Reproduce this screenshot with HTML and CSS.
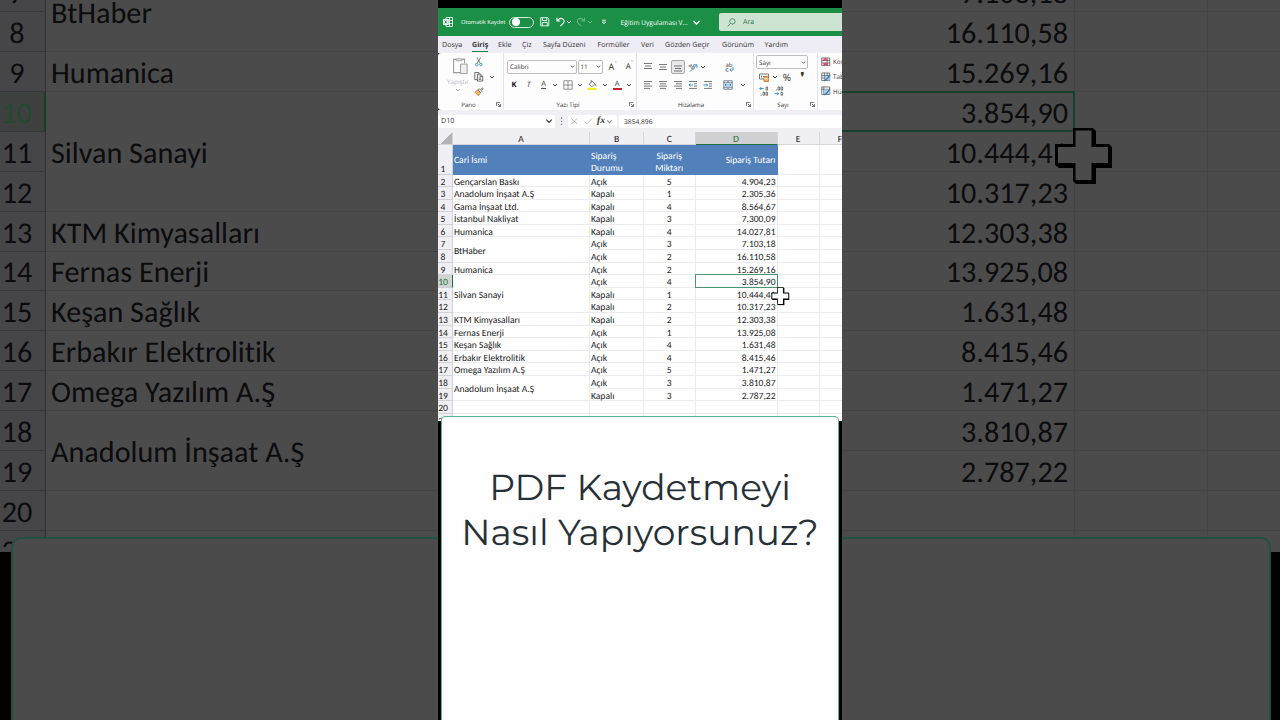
FILE: index.html
```html
<!DOCTYPE html>
<html lang="tr">
<head>
  <meta charset="UTF-8" />
  <meta name="viewport" content="width=device-width, initial-scale=1.0"/>
  <title>PDF Kaydetme</title>
  <link rel="stylesheet" href="styles.css">
</head>
<body>
  <svg class="defs">
    <symbol id="chev" viewBox="0 0 6 6"><path d="M1 2l2 2 2-2" fill="none" stroke="currentColor" stroke-width=".9"/></symbol>
    <symbol id="launch" viewBox="0 0 6 6"><path d="M.5 5V.5H5M2.2 2.2l3 3M5.4 2.5v2.9H2.5" fill="none" stroke="currentColor" stroke-width=".8"/></symbol>
    <symbol id="cross" viewBox="0 0 58 58"><path d="M19 1h20l3 3v13h13l3 3v21H42v16H22l-3-3V41H5l-4-3V17h18z" fill="#000"/><path class="cross-in" d="M21.500 3.500h16V20h16.500v16H37.500v17h-16V36H4V20h17.500z"/></symbol>
  </svg>

  <div class="stage">
    <div class="side side-left">
      <div class="big-sheet big-left">
        <div class="rn">7</div><div class="bc two">BtHaber</div>
        <div class="rn">8</div>
        <div class="rn">9</div><div class="bc">Humanica</div>
        <div class="rn cur">10</div><div class="bc three">Silvan Sanayi</div>
        <div class="rn">11</div>
        <div class="rn">12</div>
        <div class="rn">13</div><div class="bc">KTM Kimyasalları</div>
        <div class="rn">14</div><div class="bc">Fernas Enerji</div>
        <div class="rn">15</div><div class="bc">Keşan Sağlık</div>
        <div class="rn">16</div><div class="bc">Erbakır Elektrolitik</div>
        <div class="rn">17</div><div class="bc">Omega Yazılım A.Ş</div>
        <div class="rn">18</div><div class="bc two">Anadolum İnşaat A.Ş</div>
        <div class="rn">19</div>
        <div class="rn">20</div><div class="bc"></div>
        <div class="rn">21</div><div class="bc"></div>
      </div>
      <div class="big-card"></div>
    </div>

    <div class="phone">
      <div class="titlebar">
        <svg class="logo" viewBox="0 0 10 10"><path d="M3 .5h6.5v9H3zM6.5 .5v9M3 3.4h6.5M3 6.6h6.5" fill="none" stroke="#fff" stroke-width=".8"/><path d="M0 2h5.6v6H0z" fill="#fff"/><path d="M1.6 3.3l2.4 3.4M4 3.3L1.6 6.7" stroke="#1a8f45" stroke-width=".9"/></svg>
        <span class="autosave">Otomatik Kaydet</span>
        <span class="toggle"></span>
        <svg class="save" viewBox="0 0 10 10"><path d="M.7.7h7.4l1.2 1.2v7.4H.7zM2.6.7v3h4.6v-3M2.4 9.3V5.8h5.2v3.5" fill="none" stroke="#fff" stroke-width=".9"/></svg>
        <svg class="undo" viewBox="0 0 10 10"><path d="M1 .8v3.500h3.500M1.200 4.100C3 1.700 5.500.8 7.400 2.200 9.500 4 8.500 6 7 7.300L4.500 9.500" fill="none" stroke="#fff" stroke-width="1.100"/></svg>
        <svg class="c1" viewBox="0 0 6 6"><use href="#chev"/></svg>
        <svg class="redo" viewBox="0 0 10 10"><path d="M9 .8v3.500H5.500M8.800 4.100C7 1.700 4.500.8 2.600 2.200.5 4 1.500 6 3 7.300L5.500 9.500" fill="none" stroke="#fff" stroke-width="1.100"/></svg>
        <svg class="c2" viewBox="0 0 6 6"><use href="#chev"/></svg>
        <svg class="c3" viewBox="0 0 6 6"><path d="M1 1.200h4M1.200 3l1.800 1.800L4.800 3z" fill="none" stroke="#fff" stroke-width=".8"/></svg>
        <span class="doc">Eğitim Uygulaması V...</span>
        <svg class="c4" viewBox="0 0 6 6"><use href="#chev"/></svg>
        <div class="search">
          <svg viewBox="0 0 10 10"><circle cx="6" cy="3.800" r="3" fill="none" stroke="#2d7047" stroke-width=".8"/><path d="M3.800 6L.8 9.200" stroke="#2d7047" stroke-width=".8"/></svg>
          <span>Ara</span>
        </div>
      </div>

      <div class="tabs">
        <span>Dosya</span><span class="active"><b>Giriş</b></span><span>Ekle</span><span>Çiz</span><span>Sayfa Düzeni</span><span>Formüller</span><span>Veri</span><span>Gözden Geçir</span><span>Görünüm</span><span>Yardım</span>
      </div>

      <div class="ribbon">
        <div class="group pano">
          <div class="pano-tools">
            <div class="paste">
              <svg viewBox="0 0 17 19"><path d="M4.500 2.500H1.200v14h7M9.500 2.500h3.300v4" fill="none" stroke="#999" stroke-width="1.100"/><path d="M4 4V2h1.800a1.300 1.300 0 0 1 2.500 0H10v2z" fill="#ddd" stroke="#999" stroke-width=".8"/><path d="M8.500 7.500h7v10h-7z" fill="#eee" stroke="#999" stroke-width="1"/></svg>
              <span>Yapıştır</span>
              <svg class="ch" viewBox="0 0 6 6"><use href="#chev"/></svg>
            </div>
            <div class="clip">
              <svg viewBox="0 0 10 10"><path d="M3 .5l3.700 6.500M7 .5L3.300 7" stroke="#555" stroke-width=".8"/><circle cx="2.800" cy="8" r="1.300" fill="none" stroke="#2f86c5" stroke-width=".9"/><circle cx="7.200" cy="8" r="1.300" fill="none" stroke="#2f86c5" stroke-width=".9"/></svg>
              <svg viewBox="0 0 10 10"><path d="M3.500 8H.8V.6h4.400v1.500M3.600 2.300h3.200l2.400 2.300v4.900H3.600zM6.500 2.500v2.300h2.600M5 6.300h2.600M5 7.800h2.600" fill="none" stroke="#444" stroke-width=".8"/></svg>
              <svg viewBox="0 0 10 10"><path d="M1 5.500L4 3l3 3-2.500 3.200z" fill="#f3b36e" stroke="#d87d2c" stroke-width=".9"/><path d="M4 3l1.500-1.200L7 3.200 8.500.8l1 .9-1.700 2.400.5.6L7 6z" fill="#fff" stroke="#444" stroke-width=".7"/></svg>
            </div>
            <svg class="ch" viewBox="0 0 6 6"><use href="#chev"/></svg>
          </div>
          <div class="label"><span>Pano</span><svg viewBox="0 0 6 6"><use href="#launch"/></svg></div>
        </div>

        <div class="group font">
          <div class="row font-1">
            <div class="combo">Calibri<svg viewBox="0 0 6 6"><use href="#chev"/></svg></div>
            <div class="combo">11<svg viewBox="0 0 6 6"><use href="#chev"/></svg></div>
            <span class="grow">A<sup>ˆ</sup></span>
            <span class="grow small">A<sup>ˇ</sup></span>
          </div>
          <div class="row font-2">
            <b>K</b><i>T</i><span class="under">A</span>
            <svg class="ch" viewBox="0 0 6 6"><use href="#chev"/></svg>
            <svg class="ic" viewBox="0 0 10 10"><path d="M.8.8h8.400v8.400H.8zM5 .8v8.400M.8 5h8.400" fill="none" stroke="#777" stroke-width=".8"/></svg>
            <svg class="ch" viewBox="0 0 6 6"><use href="#chev"/></svg>
            <svg class="ic" viewBox="0 0 10 10"><path d="M2.200 4.200l3-3 2.700 2.700-3 2.800zM4.200 0v2.500M8.300 4.200l.9 2" fill="none" stroke="#555" stroke-width=".8"/><path d="M.3 7.700h9.400V10H.3z" fill="#f5ee25"/></svg>
            <svg class="ch" viewBox="0 0 6 6"><use href="#chev"/></svg>
            <span class="red">A</span>
            <svg class="ch" viewBox="0 0 6 6"><use href="#chev"/></svg>
          </div>
          <div class="label"><span>Yazı Tipi</span><svg viewBox="0 0 6 6"><use href="#launch"/></svg></div>
        </div>

        <div class="group align">
          <div class="row align-1">
            <svg class="ic" viewBox="0 0 10 10"><path d="M1 1.500h8M2 4h6M1 6.500h8" stroke="#555" stroke-width=".8"/></svg>
            <svg class="ic" viewBox="0 0 10 10"><path d="M1 2.500h8M2 5h6M1 7.500h8" stroke="#555" stroke-width=".8"/></svg>
            <span class="picked"><svg class="ic" viewBox="0 0 10 10"><path d="M1 4h8M2 6.500h6M1 9h8" stroke="#555" stroke-width=".8"/></svg></span>
            <svg class="ic" viewBox="0 0 10 10"><text x="0" y="6" font-size="6" fill="#444" transform="rotate(35 3 5)">ab</text><path d="M2 9.500l6.500-6.500M9 6V2.800H5.800" fill="none" stroke="#2f86c5" stroke-width=".9"/></svg>
            <svg class="ch" viewBox="0 0 6 6"><use href="#chev"/></svg>
            <i class="gap"></i>
            <svg class="ic" viewBox="0 0 10 10"><text x="1.500" y="5" font-size="6" fill="#444">ab</text><path d="M4.500 6.500H3.200a1.300 1.300 0 0 0 0 2.800h1.300" fill="none" stroke="#555" stroke-width=".8"/><path d="M9 5v3H6M7.300 6.500L5.800 8l1.500 1.500" fill="none" stroke="#2f86c5" stroke-width=".9"/></svg>
          </div>
          <div class="row align-2">
            <svg class="ic" viewBox="0 0 10 10"><path d="M1 1.500h8M1 3.800h6M1 6.100h8M1 8.400h6" stroke="#555" stroke-width=".8"/></svg>
            <svg class="ic" viewBox="0 0 10 10"><path d="M1 1.500h8M2 3.800h6M1 6.100h8M2 8.400h6" stroke="#555" stroke-width=".8"/></svg>
            <svg class="ic" viewBox="0 0 10 10"><path d="M1 1.500h8M3 3.800h6M1 6.100h8M3 8.400h6" stroke="#555" stroke-width=".8"/></svg>
            <svg class="ic" viewBox="0 0 10 10"><path d="M1 1.500h8M6 3.800h3M6 6.100h3M1 8.400h8" stroke="#555" stroke-width=".8"/><path d="M5 5H1M2.500 3.500L1 5l1.500 1.500" fill="none" stroke="#2f86c5" stroke-width=".9"/></svg>
            <svg class="ic" viewBox="0 0 10 10"><path d="M1 1.500h8M6 3.800h3M6 6.100h3M1 8.400h8" stroke="#555" stroke-width=".8"/><path d="M.5 5h4M3 3.500L4.500 5 3 6.500" fill="none" stroke="#2f86c5" stroke-width=".9"/></svg>
            <svg class="ic merge" viewBox="0 0 10 10"><path d="M.8.8h8.400v8.400H.8zM5 .8v2M5 7.200v2M.8 2.800h8.400M.8 7.200h8.400" fill="#fff" stroke="#4a6680" stroke-width=".8"/><path d="M2 5h6M3.200 3.800L2 5l1.200 1.200M6.800 3.800L8 5 6.800 6.200" fill="none" stroke="#2f86c5" stroke-width=".9"/></svg>
            <svg class="ch" viewBox="0 0 6 6"><use href="#chev"/></svg>
          </div>
          <div class="label"><span>Hizalama</span><svg viewBox="0 0 6 6"><use href="#launch"/></svg></div>
        </div>

        <div class="group number">
          <div class="combo">Sayı<svg viewBox="0 0 6 6"><use href="#chev"/></svg></div>
          <div class="row num-1">
            <svg class="ic" viewBox="0 0 10 10"><path d="M.5 2h9v5h-9zM2.500 3.500v2M4 4.500h1.500" fill="none" stroke="#555" stroke-width=".8"/><path d="M5 4.500h4.500v5H5z" fill="#f2a65a" stroke="#cf6f24" stroke-width=".8"/><path d="M5 6.800h4.500" stroke="#fff" stroke-width=".8"/></svg>
            <svg class="ch" viewBox="0 0 6 6"><use href="#chev"/></svg>
            <span class="pct">%</span>
            <span class="comma">❜</span>
          </div>
          <div class="row num-2">
            <svg class="ic" viewBox="0 0 10 10"><path d="M4.500 2.500H.8M2.300 1L.8 2.500 2.300 4" fill="none" stroke="#2f86c5" stroke-width=".9"/><path d="M7 1h1.600v3H7zM4 6.200h1.600v3H4zM7 6.200h1.600v3H7zM2.600 8.600l-.5 1.300" fill="none" stroke="#444" stroke-width=".7"/></svg>
            <svg class="ic" viewBox="0 0 10 10"><path d="M.5 7.700h4M3 6.200l1.500 1.500L3 9.200" fill="none" stroke="#2f86c5" stroke-width=".9"/><path d="M4 1h1.600v3H4zM7 1h1.600v3H7zM2.600 3.400l-.5 1.300M7 6.200h1.600v3H7z" fill="none" stroke="#444" stroke-width=".7"/></svg>
          </div>
          <div class="label"><span>Sayı</span><svg viewBox="0 0 6 6"><use href="#launch"/></svg></div>
        </div>

        <div class="group styles">
          <div><svg viewBox="0 0 10 10"><path d="M.8 1h8.400v8H.8zM.8 3.700h8.400M.8 6.300h8.400M6.500 1v8" fill="none" stroke="#555" stroke-width=".8"/><path d="M2.500 1.200h3.500v2.500H2.500zM2.500 6.300h4.500v2.500H2.500z" fill="#e5476a"/></svg>Koşullu</div>
          <div><svg viewBox="0 0 10 10"><path d="M.8 1h8.400v8H.8zM.8 3.700h8.400M.8 6.300h8.400M3.600 1v8M6.500 1v8" fill="none" stroke="#555" stroke-width=".8"/><path d="M4 4h5v4.800H4z" fill="#a5d0ef"/><path d="M9.500 3L5.500 8 3.500 9.500" fill="none" stroke="#2f76b5" stroke-width="1.300"/></svg>Tablo</div>
          <div><svg viewBox="0 0 10 10"><path d="M.8 1h8.400v8H.8zM.8 3.500h8.400M3 1v8" fill="none" stroke="#555" stroke-width=".8"/><path d="M3.200 3.700h5.500v4.800H3.200z" fill="#a5d0ef"/><path d="M9.500 3L5.500 8 3.500 9.500" fill="none" stroke="#2f76b5" stroke-width="1.300"/></svg>Hücre</div>
        </div>
      </div>

      <div class="formula">
        <div class="namebox">D10<svg viewBox="0 0 6 6"><use href="#chev"/></svg></div>
        <span class="dots">⋮</span>
        <div class="fx">
          <svg viewBox="0 0 10 10"><path d="M1.500 1.500l7 7M8.500 1.500l-7 7" stroke="#aaa" stroke-width=".9"/></svg>
          <svg viewBox="0 0 10 10"><path d="M.8 5.500L3.500 8l6-6.500" fill="none" stroke="#aaa" stroke-width=".9"/></svg>
          <em>fx</em>
          <svg class="ch" viewBox="0 0 6 6"><use href="#chev"/></svg>
        </div>
        <div class="value">3854,896</div>
      </div>

      <div class="sheet">
        <div class="ch0"></div><div class="h">A</div><div class="h">B</div><div class="h">C</div><div class="h on">D</div><div class="h">E</div><div class="h last">F</div>

        <div class="n tall">1</div><div class="th">Cari İsmi</div><div class="th low">Sipariş<br>Durumu</div><div class="th low mid">Sipariş<br>Miktarı</div><div class="th end">Sipariş Tutarı</div><div></div><div></div>
        <div class="n">2</div><div>Gençarslan Baskı</div><div>Açık</div><div class="q">5</div><div class="v">4.904,23</div><div></div><div></div>
        <div class="n">3</div><div>Anadolum İnşaat A.Ş</div><div>Kapalı</div><div class="q">1</div><div class="v">2.305,36</div><div></div><div></div>
        <div class="n">4</div><div>Gama İnşaat Ltd.</div><div>Kapalı</div><div class="q">4</div><div class="v">8.564,67</div><div></div><div></div>
        <div class="n">5</div><div>İstanbul Nakliyat</div><div>Kapalı</div><div class="q">3</div><div class="v">7.300,09</div><div></div><div></div>
        <div class="n">6</div><div>Humanica</div><div>Kapalı</div><div class="q">4</div><div class="v">14.027,81</div><div></div><div></div>
        <div class="n">7</div><div class="two">BtHaber</div><div>Açık</div><div class="q">3</div><div class="v">7.103,18</div><div></div><div></div>
        <div class="n">8</div><div>Açık</div><div class="q">2</div><div class="v">16.110,58</div><div></div><div></div>
        <div class="n">9</div><div>Humanica</div><div>Açık</div><div class="q">2</div><div class="v">15.269,16</div><div></div><div></div>
        <div class="n cur">10</div><div class="three">Silvan Sanayi</div><div>Açık</div><div class="q">4</div><div class="v sel">3.854,90</div><div></div><div></div>
        <div class="n">11</div><div>Kapalı</div><div class="q">1</div><div class="v">10.444,41</div><div></div><div></div>
        <div class="n">12</div><div>Kapalı</div><div class="q">2</div><div class="v">10.317,23</div><div></div><div></div>
        <div class="n">13</div><div>KTM Kimyasalları</div><div>Kapalı</div><div class="q">2</div><div class="v">12.303,38</div><div></div><div></div>
        <div class="n">14</div><div>Fernas Enerji</div><div>Açık</div><div class="q">1</div><div class="v">13.925,08</div><div></div><div></div>
        <div class="n">15</div><div>Keşan Sağlık</div><div>Açık</div><div class="q">4</div><div class="v">1.631,48</div><div></div><div></div>
        <div class="n">16</div><div>Erbakır Elektrolitik</div><div>Açık</div><div class="q">4</div><div class="v">8.415,46</div><div></div><div></div>
        <div class="n">17</div><div>Omega Yazılım A.Ş</div><div>Açık</div><div class="q">5</div><div class="v">1.471,27</div><div></div><div></div>
        <div class="n">18</div><div class="two">Anadolum İnşaat A.Ş</div><div>Açık</div><div class="q">3</div><div class="v">3.810,87</div><div></div><div></div>
        <div class="n">19</div><div>Kapalı</div><div class="q">3</div><div class="v">2.787,22</div><div></div><div></div>
        <div class="n">20</div><div></div><div></div><div></div><div></div><div></div><div></div>
        <div class="n">21</div><div></div><div></div><div></div><div></div><div></div><div></div>
      </div>
      <svg class="cursor" viewBox="0 0 58 58"><use href="#cross"/></svg>
      <div class="card">
        <h1>PDF Kaydetmeyi</h1>
        <h1 class="second">Nasıl Yapıyorsunuz?</h1>
      </div>
    </div>

    <div class="side side-right">
      <div class="big-sheet big-right">
        <div class="bv">7.103,18</div><div></div><div></div>
        <div class="bv">16.110,58</div><div></div><div></div>
        <div class="bv">15.269,16</div><div></div><div></div>
        <div class="bv sel">3.854,90</div><div></div><div></div>
        <div class="bv">10.444,41</div><div></div><div></div>
        <div class="bv">10.317,23</div><div></div><div></div>
        <div class="bv">12.303,38</div><div></div><div></div>
        <div class="bv">13.925,08</div><div></div><div></div>
        <div class="bv">1.631,48</div><div></div><div></div>
        <div class="bv">8.415,46</div><div></div><div></div>
        <div class="bv">1.471,27</div><div></div><div></div>
        <div class="bv">3.810,87</div><div></div><div></div>
        <div class="bv">2.787,22</div><div></div><div></div>
        <div></div><div></div><div></div>
        <div></div><div></div><div></div>
      </div>
      <svg class="cursor" viewBox="0 0 58 58"><use href="#cross"/></svg>
      <div class="big-card"></div>
    </div>
  </div>
</body>
</html>
```
FILE: styles.css
```css
* { margin: 0; padding: 0; box-sizing: border-box; }
body {
  background: #000;
  overflow: hidden;
  font-family: 'Open Sans', 'Noto Sans', sans-serif;
  text-rendering: geometricPrecision;
}
.defs { position: absolute; width: 0; height: 0; }
svg { display: block; flex: none; overflow: visible; }
.stage {
  display: grid;
  grid-template-columns: 438px 404px 438px;
  height: 720px;
}

/* dimmed enlarged sheet on both sides */
.side { position: relative; overflow: hidden; height: 720px; background: #000; }
.big-sheet {
  display: grid;
  grid-auto-rows: 39.87px;
  height: 579.5px;
  margin-top: -27.5px;
  overflow: hidden;
  background: #4b4b4b;
  font-family: Carlito, Calibri, sans-serif;
  font-variant-ligatures: none;
  font-size: 30.2px;
  color: #0c0c0e;
}
.big-left { grid-template-columns: 46px 392px; }
.big-right { grid-template-columns: 233px 133px 72px; }
.big-sheet > div {
  display: flex;
  align-items: center;
  border-bottom: 1px solid #434344;
  white-space: nowrap;
}
.big-sheet .rn {
  grid-column: 1;
  justify-content: center;
  padding-right: 11px;
  padding-top: 4px;
  background: #464649;
  border-right: 1px solid #333;
  border-bottom-color: #38383a;
}
.big-sheet .rn.cur { background: #3e4140; color: #24492f; border-right: 2px solid #173d2a; }
.big-sheet .bc { grid-column: 2; padding-left: 5px; padding-top: 4px; }
.big-right > div { border-right: 1px solid #434344; }
.big-right > div:nth-child(3n) { border-right: none; }
.big-sheet .bv { justify-content: flex-end; padding-right: 6px; padding-top: 4px; }
.big-sheet .bv.sel { border: 2px solid #173f2d; border-left: none; margin-top: -1px; padding-right: 5px; }
.two { grid-row: span 2; }
.three { grid-row: span 3; }
.big-card {
  position: absolute;
  top: 537px;
  height: 200px;
  background: #4b4b4b;
  border: 2px solid #1d5242;
}
.side-left .big-card { left: 11px; right: 0; border-right: none; border-radius: 10px 0 0 0; }
.side-right .big-card { left: 0; right: 9.5px; border-left: none; border-radius: 0 10px 0 0; }
.cursor { position: absolute; width: 18.5px; height: 18.5px; left: 333px; top: 286.5px; }
.cross-in { fill: var(--in, #fff); }
.side-right .cursor { --in: #4b4b4b; width: 58px; height: 58px; left: 212px; top: 127px; }

/* middle */
.phone { position: relative; overflow: hidden; height: 720px; padding-top: 8px; background: #000; }
.titlebar {
  display: flex;
  align-items: center;
  height: 28px;
  background: #1a8f45;
  color: #fff;
  font-size: 5.7px;
  white-space: nowrap;
}
.titlebar > * { flex: none; }
.logo { width: 10px; height: 10px; margin-left: 5px; }
.autosave { width: 48px; margin-left: 8px; }
.toggle { width: 25px; height: 11px; border: 1px solid #d5ecdc; border-radius: 6px; }
.toggle::before { content: ""; display: block; width: 8px; height: 8px; margin: .5px 0 0 1.5px; border-radius: 50%; background: #fff; }
.save { width: 9.5px; height: 9.5px; margin-left: 5.5px; }
.undo { width: 9.5px; height: 9.5px; margin-left: 6.5px; }
.redo { width: 9.5px; height: 9.5px; margin-left: 4px; opacity: .35; }
.c1, .c2, .c3 { width: 6px; height: 6px; margin-left: 1px; }
.c2 { opacity: .4; }
.c3 { margin-left: 8px; }
.doc { width: 70px; margin-left: 14px; font-size: 6.6px; }
.c4 { width: 9px; height: 9px; margin-left: 1.5px; }
.search {
  display: flex;
  align-items: center;
  gap: 7.5px;
  width: 123px;
  height: 18.5px;
  margin-left: 17.5px;
  padding-left: 8px;
  background: #cde4d3;
  border-radius: 2px 0 0 2px;
  color: #2d7047;
  font-size: 7px;
}
.search svg { width: 9px; height: 9px; }
.tabs {
  display: grid;
  grid-template-columns: 30px 26px 24px 21px 54.5px 43.5px 24px 57px 42.5px 40px;
  align-items: center;
  height: 17px;
  padding-left: 4px;
  background: #eeecf4;
  color: #333;
  font-size: 7.1px;
  white-space: nowrap;
}
.tabs b { display: inline-block; height: 13px; line-height: 12px; margin-top: 2px; border-bottom: 1.5px solid #1a7f45; }
.ribbon {
  display: flex;
  height: 57px;
  padding-left: 1px;
  background: #fdfdfe;
  border-radius: 3px 0 0 3px;
  overflow: hidden;
  color: #333;
  font-size: 6.3px;
}
.group { display: flex; flex-direction: column; flex: none; border-right: 1px solid #e2e2e4; white-space: nowrap; }
.label { display: flex; align-items: center; height: 10px; margin-top: auto; margin-bottom: 1px; font-size: 6.1px; }
.label span { flex: 1; text-align: center; }
.label svg { width: 5px; height: 5px; margin-right: 2px; }
.ch { width: 6px; height: 6px; }
.ic { width: 10px; height: 10px; }
.row { display: grid; align-items: center; justify-items: center; }
.combo {
  display: flex;
  align-items: center;
  justify-content: space-between;
  height: 14px;
  padding: 0 1px 0 2px;
  border: 1px solid #bdbdc0;
  border-radius: 2px;
}
.combo svg { width: 5px; height: 5px; }
.pano { width: 65px; }
.pano-tools { display: flex; height: 43px; padding-top: 4px; }
.paste { width: 34px; margin-left: 2px; display: flex; flex-direction: column; align-items: center; color: #b8b8bc; }
.paste svg { width: 17px; height: 18px; margin-left: 5px; }
.paste span { line-height: 9px; margin-top: 2px; }
.paste .ch { width: 6px; height: 6px; margin: 1px 0 0; }
.clip { display: flex; flex-direction: column; gap: 5.5px; }
.clip svg { width: 9.5px; height: 9.5px; margin-left: -1px; }
.pano-tools > .ch { margin: 17px 0 0 5px; }
.pano .label span { padding-left: 2px; }
.font { width: 133px; padding-left: 3px; }
.font-1 { grid-template-columns: 70px 25px 21px 13px; height: 14px; margin-top: 6.5px; }
.font-1 .combo { width: 100%; }
.font-1 .combo + .combo { margin-left: 1px; }
.grow { font-size: 9px; line-height: 12px; }
.grow sup { font-size: 6px; line-height: 0; }
.small { font-size: 8px; }
.font-2 { grid-template-columns: 14px 15px 15px 8px 18px 6px 18px 7px 18px 5px; height: 12px; margin-top: 5px; font-size: 7.5px; }
.font-2 b { color: #111; }
.font-2 .under { border-bottom: 1px solid #555; line-height: 8px; }
.font-2 .red { width: 9px; text-align: center; line-height: 8px; border-bottom: 2px solid #c9202c; }
.align { width: 117px; padding-left: 4px; }
.align .label span { padding-right: 5px; }
.align-1 { grid-template-columns: 14.8px 14.8px 14.8px 15px 5px 17px 14px; height: 15px; margin-top: 6px; }
.picked { display: flex; align-items: center; justify-content: center; width: 13.5px; height: 14px; background: #e8e8ea; border: 1px solid #aaa; border-radius: 2px; }
.align-2 { grid-template-columns: 14.8px 14.8px 14.8px 14.8px 14.8px 27px 3px; height: 12px; margin-top: 4.5px; }
.number { width: 64px; padding-left: 2px; }
.number .combo { width: 52px; height: 14px; margin-top: 2px; }
.num-1 { grid-template-columns: 15px 8px 16px 15px; height: 12px; margin-top: 2px; }
.pct { font-size: 10px; line-height: 12px; }
.comma { font-size: 12px; font-weight: bold; line-height: 12px; }
.num-2 { grid-template-columns: 15px 15px; height: 12px; margin-top: 2px; }
.styles { padding: 4px 0 0 3px; gap: 5px; border: none; }
.styles div { display: flex; align-items: center; gap: 2.5px; height: 9.7px; }
.styles svg { width: 9.5px; height: 9.5px; }

.formula { display: flex; align-items: center; height: 22px; padding: 1px 0; background: #f0eff4; font-size: 6.7px; color: #333; }
.namebox, .fx, .value { display: flex; align-items: center; height: 13px; background: #fff; border-radius: 2px; }
.namebox { width: 117px; padding: 0 2px 0 3px; justify-content: space-between; font-size: 7.2px; }
.namebox svg { width: 8px; height: 8px; }
.dots { width: 13px; text-align: center; font-size: 9px; line-height: 12px; }
.fx { width: 49px; padding-left: 2px; gap: 5px; }
.fx svg { width: 8.5px; height: 8.5px; }
.fx em { font: italic bold 9.5px 'Liberation Serif', serif; }
.fx .ch { width: 7px; height: 7px; margin-left: -4px; color: #888; }
.value { flex: 1; margin-left: 2px; padding-left: 5px; }

.sheet {
  display: grid;
  grid-template-columns: 15px 137px 54px 51.5px 82px 42px 42px;
  grid-template-rows: 12.5px 30px;
  grid-auto-rows: 12.6px;
  height: 288.5px;
  overflow: hidden;
  background: #fff;
  font-family: Carlito, Calibri, sans-serif;
  font-variant-ligatures: none;
  font-size: 9.55px;
  color: #1c1c1c;
}
.sheet > div {
  display: flex;
  align-items: center;
  min-height: 0;
  padding: 2.4px 1px 0;
  border-right: 1px solid #ececee;
  border-bottom: 1px solid #ececee;
  line-height: 12px;
  white-space: nowrap;
}
.sheet .h { justify-content: center; background: #f0eff3; border-color: #d6d6da; }
.sheet .on { background: #d0d0d2; color: #1f7044; border-bottom-color: #1f7044; }
.sheet .ch0 { background: linear-gradient(135deg, #f0eff3 55%, #b4b4b8 56%); border-color: #d6d6da; }
.sheet .n { grid-column: 1; justify-content: center; padding: 2.4px 4px 0 0; background: #f0eff3; border-color: #d2d2d6; }
.sheet .n.cur { background: #d0d4d2; color: #1f7044; border-right-color: #1f7044; }
.sheet .n.tall { padding-top: 19px; }
.sheet .th { background: #5280bb; color: #fff; border-color: #5280bb; }
.sheet .low { padding-top: 6px; line-height: 12.4px; }
.sheet .mid { justify-content: center; text-align: center; }
.sheet .end { justify-content: flex-end; }
.sheet .q { justify-content: center; }
.sheet .v { justify-content: flex-end; }
.sheet .v.sel { border: 1px solid #4b9672; margin: -1px 0 0 -1px; padding-right: 1px; }

.card {
  position: absolute;
  left: 3px;
  right: 3px;
  top: 416px;
  height: 320px;
  padding-top: 49px;
  background: #fefefe;
  border: 1px solid #5cb398;
  border-radius: 4px;
  text-align: center;
}
h1 {
  font-family: Montserrat, Inter, sans-serif;
  font-weight: 400;
  font-size: 36px;
  line-height: 44.5px;
  color: #263036;
  white-space: nowrap;
}
```
